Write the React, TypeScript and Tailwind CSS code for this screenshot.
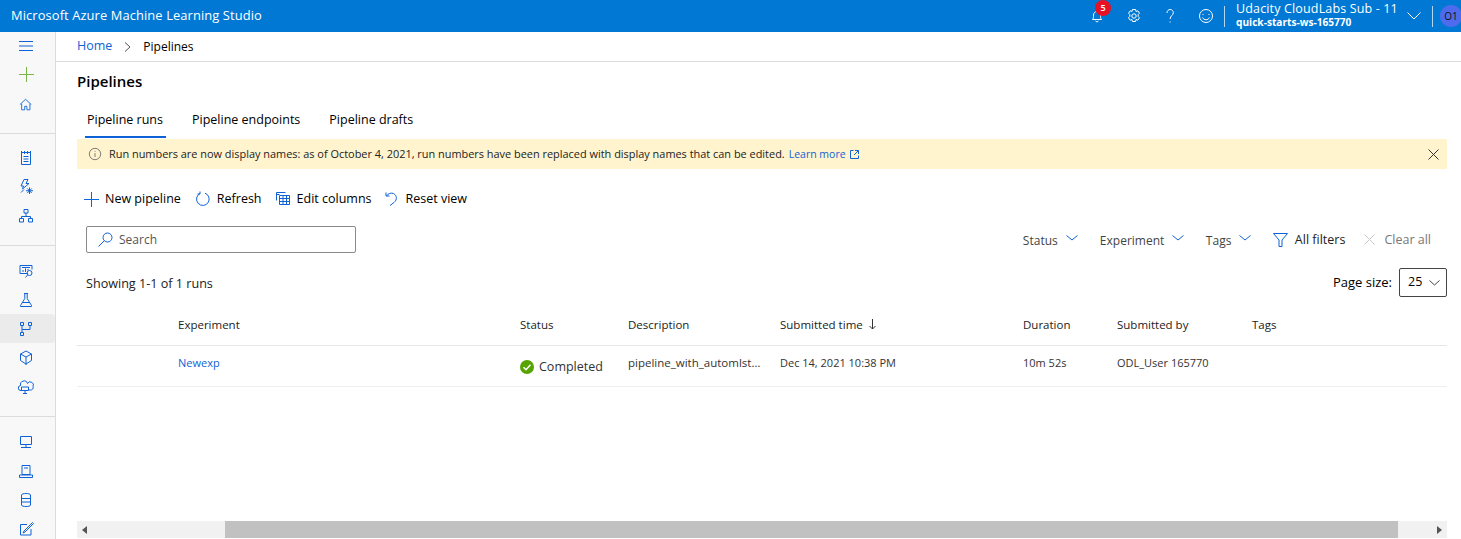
import React from 'react';

const FONT = "font-['Open_Sans','Noto_Sans',sans-serif]";

const Stroke: React.FC<{ size?: number; className?: string; children: React.ReactNode }> = ({
  size = 16,
  className = 'text-[#0f62d6]',
  children,
}) => (
  <svg
    width={size}
    height={size}
    viewBox="0 0 16 16"
    fill="none"
    stroke="currentColor"
    strokeWidth="1"
    className={`shrink-0 ${className}`}
  >
    {children}
  </svg>
);

const NavItem: React.FC<{ active?: boolean; children: React.ReactNode; h?: string }> = ({
  active,
  children,
  h = 'h-[29px]',
}) => (
  <div className={`flex shrink-0 ${h} items-center justify-center pr-[3px] ${active ? 'bg-[#ebebeb] rounded-r-sm' : ''}`}>
    {children}
  </div>
);

const Divider = () => <div className="h-px shrink-0 bg-[#dcdcdc]" />;

const Filter: React.FC<{ label: string; width: string }> = ({ label, width }) => (
  <div className={`flex items-center ${width} text-[12px] text-[#444]`}>
    <span className="mt-[2px]">{label}</span>
    <svg width="12" height="6" viewBox="0 0 12 6" fill="none" stroke="#0f62d6" className="ml-[8px] mb-[4px]">
      <path d="M.5.5 6 5 11.5.5" />
    </svg>
  </div>
);

const columns = 'grid grid-cols-[101px_342px_108px_152px_243px_94px_135px_1fr]';

export default function App() {
  return (
    <div className={`flex h-[539px] w-[1461px] flex-col overflow-hidden bg-white text-[12px] text-black ${FONT}`}>
      <header className="flex h-[32px] shrink-0 items-center bg-[#0078d4] text-white">
        <div className="pl-[11px] text-[12.9px] tracking-[0.1px]">Microsoft Azure Machine Learning Studio</div>
        <div className="ml-auto flex items-center">
          <div className="relative mr-[21px]">
            <Stroke className="text-white">
              <path d="M3.5 11.5c1-1 1-2.500 1-4.500 0-2 1.500-3.500 3.500-3.500s3.500 1.500 3.500 3.500c0 2 0 3.500 1 4.500zM6.500 13c.5 1 2.500 1 3 0" />
            </Stroke>
            <span className="absolute -top-[8px] left-[6px] flex h-[16px] w-[16px] items-center justify-center rounded-full bg-[#e81123] text-[9px] font-semibold">
              5
            </span>
          </div>
          <div className="mr-[20px]">
            <Stroke className="text-white">
              <circle cx="8" cy="8" r="2.200" />
              <path d="M6.500 1.500h3l.5 2 1.800-.7 1.700 2.400-1.300 1.400 0 1.800 1.300 1.400-1.700 2.400-1.800-.7-.5 2h-3l-.5-2-1.800.7-1.700-2.400 1.300-1.400 0-1.800-1.300-1.400 1.700-2.400 1.800.7z" />
            </Stroke>
          </div>
          <div className="mr-[20px]">
            <Stroke className="text-white">
              <path d="M5 5c0-2 1.300-3.500 3.200-3.500S11.300 3 11.300 4.800c0 2.500-3.200 3-3.200 6.200M8.100 13.500v1" />
            </Stroke>
          </div>
          <div className="mr-[10px]">
            <Stroke className="text-white">
              <circle cx="8" cy="8" r="6.500" />
              <path d="M5 6v1M11 6v1M4.500 9.500c1.500 3 5.500 3 7 0" />
            </Stroke>
          </div>
          <div className="mr-[11px] h-[21px] w-px bg-[#b3d7f2]" />
          <div className="-mt-[3px] w-[171px] leading-none">
            <div className="text-[12.500px] leading-[15px] tracking-[0.15px]">Udacity CloudLabs Sub - 11</div>
            <div className="text-[10.150px] font-bold leading-[13px]">quick-starts-ws-165770</div>
          </div>
          <svg width="14" height="8" viewBox="0 0 14 8" fill="none" stroke="white" className="mr-[11px]">
            <path d="M.5.5 7 7l6.500-6.500" />
          </svg>
          <div className="mr-[7px] h-[21px] w-px bg-[#b3d7f2]" />
          <div className="mr-[-1px] flex h-[22px] w-[22px] items-center justify-center rounded-full bg-[#4f6bed] text-[10px] font-medium text-[#111]">
            <span>O1</span>
          </div>
        </div>
      </header>

      <div className="flex min-h-0 flex-1">
        <nav className="flex w-[56px] shrink-0 flex-col overflow-hidden border-r border-[#dcdcdc] bg-[#f8f8f8]">
          <NavItem h="h-[27px]">
            <svg width="14" height="10" viewBox="0 0 14 10" stroke="#0f62d6" fill="none">
              <path d="M0 .5h14M0 5h14M0 9.500h14" />
            </svg>
          </NavItem>
          <NavItem h="h-[31px]">
            <svg width="15" height="15" viewBox="0 0 15 15" stroke="#7ab648" fill="none">
              <path d="M7.500 0v15M0 7.500h15" />
            </svg>
          </NavItem>
          <NavItem h="h-[29px]">
            <Stroke size={14}>
              <path d="M1 7.500 7.500 1.500 14 7.500M3 6.500v7h3.500V9.500h2.500v4h3.500v-7" />
            </Stroke>
          </NavItem>
          <div className="h-[14px] shrink-0" />
          <Divider />
          <div className="h-[9px] shrink-0" />
          <NavItem>
            <Stroke>
              <path d="M3.500 2.500h9v12h-9zM3.500 1v3M6.500 1v3M9.500 1v3M12.500 1v3M5.500 6.500h5M5.500 9h5M5.500 11.500h5" />
            </Stroke>
          </NavItem>
          <NavItem>
            <Stroke>
              <path d="M6 .5h4L8 4.500h3L4.500 10l1-3H3zM3 13.500l3-3M11.500 8.500v6.500M8 11.750h7M9.300 9.500l4.400 4.500M13.700 9.500l-4.400 4.500" />
            </Stroke>
          </NavItem>
          <NavItem>
            <Stroke>
              <path d="M6 1.500h4v3.500H6zM8 5v3.500M3.500 8.500h9v2M3.500 8.500v2M1.500 10.500h4v3.500h-4zM10.500 10.500h4v3.500h-4z" />
            </Stroke>
          </NavItem>
          <div className="h-[15px] shrink-0" />
          <Divider />
          <div className="h-[10px] shrink-0" />
          <NavItem>
            <Stroke>
              <path d="M10 10.500H2V2.500h12v4M4 4.500h8M5 9V7M7.500 9V5.500M10 7.500V6" />
              <circle cx="11.500" cy="10" r="2.500" />
              <path d="M9.500 12 7.500 14.500" />
            </Stroke>
          </NavItem>
          <NavItem>
            <Stroke>
              <path d="M6 1.500h4M6.800 1.500v5L2.500 13.500v1h11v-1L9.200 6.500v-5M4.500 10.500h7" />
            </Stroke>
          </NavItem>
          <NavItem active>
            <Stroke>
              <path d="M2.500 1.500h3v3h-3zM10.500 1.500h3v3h-3zM2.500 11.500h3v3h-3zM4 4.500v7M4 8.500h8V4.500" />
            </Stroke>
          </NavItem>
          <NavItem>
            <Stroke>
              <path d="M8 1 13.500 4v6.500L8 14 2.500 10.500V4zM2.500 4 8 7l5.500-3M8 7v8" />
            </Stroke>
          </NavItem>
          <NavItem>
            <Stroke>
              <path d="M4 11.500H3A2.500 2.500 0 0 1 2.700 6.500 3.500 3.500 0 0 1 9.500 4.500 3 3 0 0 1 15 7.500a2.500 2.500 0 0 1-2.500 3.500H11" />
              <path d="M3.500 8h7v3.500h-7zM7 11.500v3M5 14.500h4" />
            </Stroke>
          </NavItem>
          <div className="h-[15px] shrink-0" />
          <Divider />
          <div className="h-[10px] shrink-0" />
          <NavItem>
            <Stroke>
              <path d="M2.500 2.500h11v8h-11zM8 10.500v3M3 13.500h10" />
            </Stroke>
          </NavItem>
          <NavItem>
            <Stroke>
              <path d="M4 2.500h8v9H4zM6 5h4M1.500 14.500h13V12h-13z" />
            </Stroke>
          </NavItem>
          <NavItem>
            <Stroke>
              <path d="M3.500 3c0-2 9-2 9 0v10c0 2-9 2-9 0zM3.500 6.500h9M3.500 10h9" />
            </Stroke>
          </NavItem>
          <NavItem>
            <Stroke>
              <path d="M13 8v6H2.500V3.500H9M14.500 1.500 6 10l-1 2 2-1 8.500-8.500z" />
            </Stroke>
          </NavItem>
        </nav>

        <main className="flex min-w-0 flex-1 flex-col pl-[21px] pr-[14px]">
          <div className="-ml-[21px] -mr-[14px] flex h-[30px] shrink-0 items-center border-b border-[#dcdcdc] pl-[21px]">
            <span className="text-[12.500px] text-[#0f62d6]">Home</span>
            <svg width="7" height="10" viewBox="0 0 7 10" fill="none" stroke="#555" className="mx-[12px]">
              <path d="M1 .5 6 5 1 9.500" />
            </svg>
            <span className="text-[12px]">Pipelines</span>
          </div>

          <h1 className="mt-[9px] text-[15px] font-semibold leading-[20px]">Pipelines</h1>

          <div className="mt-[19px] flex h-[28px] whitespace-nowrap text-[12.500px] leading-[20px]">
            <div className="ml-[8px] w-[81px] border-b-2 border-[#0f62d6] pl-[2px]">Pipeline runs</div>
            <div className="ml-[26px]">Pipeline endpoints</div>
            <div className="ml-[29px]">Pipeline drafts</div>
          </div>

          <div className="mt-[1px] flex h-[30px] shrink-0 items-center bg-[#fff4ce] pl-[11px] pr-[8px] text-[10.930px] text-[#222]">
            <Stroke size={14} className="text-[#6b6b6b]">
              <circle cx="8" cy="8" r="6.500" />
              <path d="M8 7v4.500M8 4.500v1" />
            </Stroke>
            <span className="ml-[7px] mt-[1px]">
              Run numbers are now display names: as of October 4, 2021, run numbers have been replaced with display names that can be edited.
            </span>
            <span className="ml-[4px] mt-[2px] text-[10.500px] text-[#0f62d6]">Learn more</span>
            <svg width="9" height="9" viewBox="0 0 9 9" fill="none" stroke="#0f62d6" className="ml-[4px]">
              <path d="M3.500.5h-3v8h8v-3M5 .5h3.500V4M8.500.5 4 5" />
            </svg>
            <svg width="11" height="11" viewBox="0 0 11 11" fill="none" stroke="#333" className="ml-auto">
              <path d="M.5.5l10 10M10.500.5l-10 10" />
            </svg>
          </div>

          <div className="mt-[21px] flex h-[18px] items-center pl-[7px] text-[12.500px]">
            <svg width="15" height="15" viewBox="0 0 15 15" stroke="#0a66e0" fill="none" className="shrink-0">
              <path d="M7.500 0v15M0 7.500h15" />
            </svg>
            <span className="ml-[6px]">New pipeline</span>
            <Stroke className="text-[#0f62d6] ml-[14px]">
              <path d="M5 2.500A6.300 6.300 0 1 0 10 2.200M5 .5v2.500H2.500" />
            </Stroke>
            <span className="ml-[6px]">Refresh</span>
            <Stroke className="text-[#0f62d6] ml-[13px]">
              <path d="M1.500 1.500h9M1.500 3.500h3M1.500 1.500v8M4.500 4.500h10v9h-10zM4.500 7.500h10M4.500 10.500h10M8 4.500v9M11.500 4.500v9" />
            </Stroke>
            <span className="ml-[6px]">Edit columns</span>
            <Stroke className="text-[#0f62d6] ml-[13px]">
              <path d="M1 1.500v3.500h3.500M1.500 5C3 2.500 6 1.500 8.500 2.500c3.500 2 4 6 .5 9l-4 3" />
            </Stroke>
            <span className="ml-[5px]">Reset view</span>
          </div>

          <div className="mt-[18px] flex h-[27px] items-center">
            <div className="ml-[9px] flex h-[27px] w-[270px] items-center rounded-[2px] border border-[#8a8a8a] pl-[11px] text-[12px] text-[#555]">
              <svg width="15" height="15" viewBox="0 0 15 15" fill="none" stroke="#0f62d6">
                <circle cx="9.500" cy="5.500" r="4.500" />
                <path d="M6.300 8.700.5 14.500" />
              </svg>
              <span className="ml-[6px]">Search</span>
            </div>
            <div className="ml-auto flex items-center pr-[16px]">
              <Filter label="Status" width="w-[77px]" />
              <Filter label="Experiment" width="w-[106px]" />
              <Filter label="Tags" width="w-[67px]" />
              <svg width="15" height="14" viewBox="0 0 15 14" fill="none" stroke="#0f62d6">
                <path d="M.5.500h14L9 7v6.500H6V7z" />
              </svg>
              <span className="ml-[7px] mt-[1px] text-[12.500px] text-[#222]">All filters</span>
              <svg width="11" height="11" viewBox="0 0 11 11" fill="none" stroke="#c8c8c8" className="ml-[19px]">
                <path d="M.5.5l10 10M10.500.5l-10 10" />
              </svg>
              <span className="ml-[9px] mt-[1px] text-[12.500px] text-[#777]">Clear all</span>
            </div>
          </div>

          <div className="mt-[15px] flex h-[29px] items-center pl-[9px]">
            <span className="mt-[3px] text-[12.600px] text-[#222]">Showing 1-1 of 1 runs</span>
            <span className="ml-auto mr-[7px] text-[13px]">Page size:</span>
            <div className="flex h-[29px] w-[48px] items-center justify-between rounded-[2px] border border-[#444] pl-[8px] pr-[6px] text-[12.500px]">
              25
              <svg width="11" height="6" viewBox="0 0 11 6" fill="none" stroke="#444">
                <path d="M.5.5 5.500 5l5-4.500" />
              </svg>
            </div>
          </div>

          <div className={`${columns} mt-[13px] h-[36px] items-center border-b border-[#e6e6e6] pb-[6px] text-[11.500px] text-[#222]`}>
            <div />
            <div>Experiment</div>
            <div>Status</div>
            <div>Description</div>
            <div className="flex items-center">
              Submitted time
              <svg width="7" height="11" viewBox="0 0 7 11" fill="none" stroke="#333" className="ml-[6px]">
                <path d="M3.500 0v10M.5 7l3 3 3-3" />
              </svg>
            </div>
            <div>Duration</div>
            <div>Submitted by</div>
            <div>Tags</div>
          </div>

          <div className={`${columns} h-[41px] items-start border-b border-[#eeeeee] text-[11px] text-[#333]`}>
            <div />
            <div className="mt-[9px] text-[#0f62d6]">Newexp</div>
            <div className="mt-[12px] flex items-center text-[12.500px]">
              <svg width="14" height="14" viewBox="0 0 14 14">
                <circle cx="7" cy="7" r="7" fill="#57a300" />
                <path d="M3.500 7.200 6 9.700l4.500-5" fill="none" stroke="white" strokeWidth="1.500" />
              </svg>
              <span className="ml-[5px]">Completed</span>
            </div>
            <div className="mt-[8px] truncate pr-[18px] text-[11.500px]">pipeline_with_automlstep</div>
            <div className="mt-[9px]">Dec 14, 2021 10:38 PM</div>
            <div className="mt-[9px]">10m 52s</div>
            <div className="mt-[9px]">ODL_User 165770</div>
            <div />
          </div>

          <div className="mt-auto mb-[1px] flex h-[17px] shrink-0 items-center bg-[#f1f1f1]">
            <svg width="6" height="8" viewBox="0 0 6 8" fill="#555" className="ml-[5px]">
              <path d="M5 0v8L0 4z" />
            </svg>
            <div className="ml-[137px] h-full w-[1173px] bg-[#c1c1c1]" />
            <svg width="6" height="8" viewBox="0 0 6 8" fill="#555" className="ml-auto mr-[5px]">
              <path d="M1 0v8l5-4z" />
            </svg>
          </div>
        </main>
      </div>
    </div>
  );
}
